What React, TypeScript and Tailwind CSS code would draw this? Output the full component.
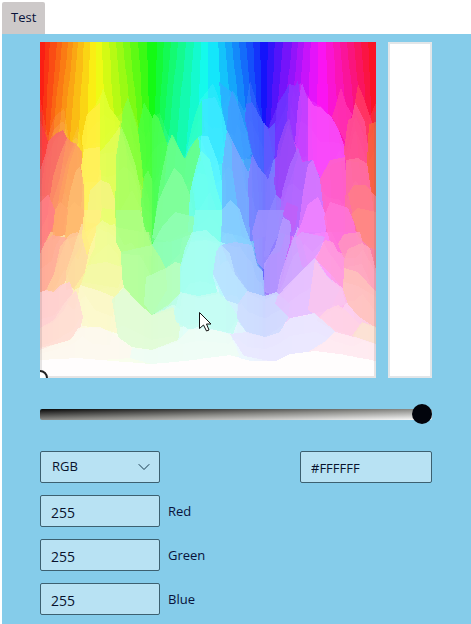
import { useState } from "react";
import { ChevronDown } from "lucide-react";

type Point = [number, number];

const SIZE = 336;

// Upper edges of the paler zones of the spectrum, from strong to faint colour
const ridges: { white: number; points: Point[] }[] = [
  {
    white: 0.08,
    points: [[0, 55], [8, 95], [14, 75], [24, 66], [30, 104], [38, 84], [42, 106], [50, 71], [57, 60], [63, 48], [70, 66], [77, 75], [82, 70], [88, 55], [98, 84], [106, 96], [113, 75], [120, 71], [127, 91], [136, 106], [145, 116], [152, 84], [160, 58], [173, 41], [182, 65], [193, 48], [205, 71], [210, 38], [223, 81], [228, 86], [237, 65], [250, 41], [256, 56], [260, 40], [270, 58], [280, 64], [290, 75], [305, 103], [315, 61], [327, 81], [336, 61]],
  },
  {
    white: 0.24,
    points: [[0, 104], [8, 116], [15, 97], [23, 91], [30, 110], [35, 98], [42, 132], [46, 112], [54, 101], [60, 101], [68, 91], [75, 85], [84, 88], [95, 125], [106, 155], [120, 130], [133, 92], [145, 120], [158, 93], [165, 106], [172, 132], [180, 112], [187, 87], [200, 115], [213, 118], [225, 133], [235, 110], [248, 75], [258, 108], [262, 116], [270, 113], [280, 135], [290, 125], [300, 108], [307, 124], [315, 85], [328, 122], [336, 105]],
  },
  {
    white: 0.48,
    points: [[0, 204], [12, 188], [15, 164], [25, 150], [38, 190], [43, 166], [54, 155], [67, 178], [75, 181], [82, 165], [92, 148], [103, 172], [113, 203], [123, 190], [143, 168], [157, 171], [170, 150], [182, 170], [190, 158], [212, 191], [217, 223], [223, 228], [225, 248], [237, 255], [246, 223], [253, 191], [262, 181], [278, 155], [287, 181], [303, 213], [307, 191], [323, 190], [336, 208]],
  },
  {
    white: 0.72,
    points: [[0, 250], [14, 248], [25, 226], [33, 248], [40, 245], [53, 215], [68, 202], [79, 214], [84, 245], [97, 259], [112, 273], [124, 265], [140, 251], [141, 225], [150, 200], [166, 198], [178, 202], [173, 231], [183, 220], [190, 218], [207, 248], [225, 258], [234, 252], [243, 251], [258, 232], [275, 216], [288, 235], [302, 246], [307, 225], [322, 222], [336, 255]],
  },
  {
    white: 0.88,
    points: [[0, 305], [16, 298], [33, 288], [42, 272], [52, 286], [70, 288], [73, 255], [84, 248], [98, 262], [112, 273], [133, 268], [140, 285], [160, 280], [173, 285], [188, 290], [197, 278], [207, 291], [225, 295], [240, 285], [250, 276], [264, 273], [275, 271], [294, 287], [313, 295], [323, 281], [336, 286]],
  },
  {
    white: 0.97,
    points: [[0, 318], [38, 316], [60, 318], [112, 322], [145, 319], [190, 313], [210, 319], [235, 319], [250, 312], [275, 309], [300, 312], [336, 319]],
  },
];

const hueStops = [
  0, 5, 10, 17, 22, 28, 33, 38, 44, 50, 56, 62, 69, 76, 83, 90, 98, 107, 117, 124,
  131, 138, 146, 154, 161, 168, 178, 185, 192, 199, 206, 213, 220, 228, 235, 243,
  252, 258, 264, 271, 278, 286, 293, 300, 307, 314, 321, 328, 336,
];

// Single-colour facets, painted in order so that lower ones cover upper ones
const facets: [string, string][] = [
  // red to yellow
  ["#fb3a40", "0,78 5,90 8,100 4,128 0,150"],
  ["#f7666a", "0,128 5,114 8,100 15,92 23,88 27,96 20,135 10,168 0,190"],
  ["#fb8c66", "8,168 13,135 20,112 27,96 36,103 30,120 24,150 15,190 8,190"],
  ["#fd9f60", "15,180 20,150 27,120 35,100 42,110 42,150 40,190 15,195"],
  ["#fdbb70", "24,185 30,150 36,128 40,125 44,140 46,190 26,198"],
  ["#ffee3c", "44,125 42,95 47,72 54,66 60,60 61,110 58,140 44,140"],
  ["#dfff30", "60,112 60,60 63,46 70,66 76,74 80,80 78,92 74,110"],
  ["#fff15e", "41,125 44,107 60,105 62,180 45,190 44,145"],
  ["#e2fd58", "60,110 70,98 76,90 80,84 78,150 76,190 62,180"],
  ["#f4f582", "46,180 50,148 61,138 70,142 76,160 76,185"],
  // yellow to green
  ["#84ff3c", "81,86 83,68 88,55 96,82 102,110 102,145 90,120"],
  ["#4aff3c", "98,88 104,60 112,75 112,168 104,140"],
  ["#a8ff60", "75,185 76,115 81,84 88,100 96,125 101,150 102,190"],
  ["#68ff58", "101,160 104,135 108,128 113,140 116,190 104,190"],
  // green to cyan
  ["#4cff50", "112,78 114,72 118,75 125,95 128,105 120,190 112,203"],
  ["#68ff84", "112,200 120,140 128,102 132,92 142,112 145,117 150,106 158,94 161,118 152,140 158,185 125,200"],
  ["#84ff9c", "112,196 118,160 124,146 134,126 142,134 149,150 158,190 130,200"],
  ["#2cffc4", "148,105 152,84 156,70 162,58 165,90 160,94"],
  ["#3ce8ff", "162,100 162,58 175,55 182,70 187,88 182,122 170,122"],
  ["#5cf6ff", "161,112 161,94 168,94 178,120 184,150 183,185 170,150"],
  ["#6cfff0", "148,190 150,150 156,125 161,108 170,118 176,145 183,168 182,200"],
  // cyan to blue
  ["#2cb0ff", "182,65 179,40 185,45 192,50 200,68 195,94 187,90"],
  ["#409cff", "187,90 188,66 192,48 200,68 206,88 212,112 204,118 195,115"],
  ["#68b8ff", "182,125 187,88 192,98 200,115 206,150 205,195 182,190"],
  ["#78a4ff", "192,125 192,98 202,118 208,130 212,120 212,200 202,195"],
  ["#4868ff", "205,78 206,62 212,60 223,80 228,86 235,110 234,130 225,133 214,118"],
  ["#7a80ff", "210,200 208,140 212,112 218,124 225,133 235,115 237,190"],
  // blue to magenta
  ["#6a34ff", "228,86 235,85 237,62 245,50 249,42 250,75 240,110 234,118"],
  ["#6058ff", "224,130 224,80 228,88 235,80 235,112 228,138"],
  ["#8f34ff", "247,78 249,42 255,44 258,38 262,70 257,105 252,95"],
  ["#c444ff", "255,100 258,62 262,40 267,56 271,60 273,122 262,118"],
  ["#f84cfa", "268,120 268,55 274,64 280,65 285,70 290,73 298,86 304,103 306,118 292,122 280,137"],
  ["#9448f8", "234,140 238,104 244,85 249,76 254,100 258,114 250,140 238,160"],
  ["#8c84ff", "224,215 228,172 236,152 243,160 246,190 240,210"],
  ["#ac68ff", "238,190 242,150 250,122 258,105 262,120 272,118 282,140 284,190 255,195"],
  ["#d878ff", "258,190 263,150 268,122 273,118 280,137 286,160 287,190"],
  // magenta to red
  ["#ff30b0", "292,75 296,62 301,45 306,62 312,72 306,102"],
  ["#ff3864", "314,66 318,42 324,56 332,80 328,100"],
  ["#ff5090", "304,108 308,78 312,76 315,60 325,80 330,122 315,120 305,118"],
  ["#ff62c8", "280,137 290,118 305,115 308,190 286,190"],
  ["#ff70a0", "305,190 306,118 318,116 328,122 332,150 334,190"],
  ["#f8643c", "327,120 329,82 336,80 336,190 332,155"],
  ["#ff7c88", "308,152 314,143 326,143 336,155 336,208 318,195"],

  // lower half, red to yellow
  ["#ff7f86", "0,160 8,152 15,168 13,185 8,195 3,205 0,212"],
  ["#ffa86c", "12,198 15,168 20,160 28,168 26,190"],
  ["#ffbb70", "25,198 28,168 34,160 44,168 43,185 38,192"],
  ["#ffaa98", "0,212 5,200 12,193 27,196 18,220 14,232 6,248 0,250"],
  ["#ffc79a", "6,250 14,232 20,205 30,192 38,190 40,205 32,220 25,240 16,250"],
  ["#fddba0", "26,248 26,230 34,205 42,180 50,205 45,230 35,245"],
  ["#fff080", "42,195 44,168 60,168 64,178 56,190 52,200 47,214"],
  ["#e9ff70", "60,180 62,166 75,168 76,184 70,188"],
  ["#f0fb94", "42,240 50,215 55,205 56,185 62,178 70,183 75,182 80,200 82,235 78,246"],
  ["#f5f8a8", "40,245 48,223 66,220 82,225 83,245 75,255 73,275 55,268"],
  ["#fbf8cc", "40,243 50,246 62,250 74,255 78,292 60,286 42,284 36,265"],
  ["#ffcfd2", "0,250 6,248 14,250 20,243 30,240 33,250 24,268 14,280 0,286"],
  ["#ffdcd4", "0,306 0,286 14,278 24,262 30,254 36,248 40,262 43,275 40,287 30,298 16,302"],
  // lower half, yellow to cyan
  ["#acff84", "76,200 76,168 100,168 106,190 112,203 112,214 82,212"],
  ["#90ffb4", "112,203 122,185 135,170 155,175 152,195 148,206 141,222 135,220 126,227 120,215"],
  ["#b0ff9c", "82,235 81,210 112,203 120,215 126,227 127,248 112,273 97,260 84,245"],
  ["#b8ffba", "106,235 126,226 135,220 141,222 141,250 130,262 112,273 104,262"],
  ["#86ffec", "152,198 155,168 182,168 182,180 180,200 166,198"],
  ["#a2fff0", "140,226 145,206 152,190 166,188 180,200 178,215 173,235 178,252 158,256 140,250"],
  ["#dffcd4", "72,258 83,246 97,260 112,273 133,265 140,285 138,300 112,308 92,305 78,295"],
  ["#c4fdf2", "134,270 140,250 158,254 178,250 190,262 199,276 193,292 175,288 160,284 150,288 136,280"],
  // lower half, cyan to magenta
  ["#88d0ff", "181,200 182,168 190,158 200,168 205,185 212,203 195,205"],
  ["#a8c8ff", "181,203 195,200 212,203 217,223 223,230 225,260 207,250 192,228"],
  ["#b8e0ff", "173,232 176,210 181,203 190,212 195,232 207,248 200,263 186,258"],
  ["#9c90ff", "217,220 212,190 218,168 244,168 240,190 232,205 224,228"],
  ["#b49cff", "224,250 224,222 235,205 243,175 251,180 250,200 242,230 238,254"],
  ["#cca8ff", "236,255 240,235 250,205 258,184 262,200 268,222 250,242"],
  ["#c060f8", "243,172 247,160 258,165 256,182 253,191 250,180"],
  ["#f084ff", "256,194 262,180 268,162 278,155 284,168 287,180 284,198 272,210"],
  ["#dd9cff", "255,196 262,190 285,195 280,208 268,225 262,225"],
  ["#cfdcff", "198,262 207,249 224,254 236,250 250,262 248,276 240,290 225,295 207,291 197,276"],
  ["#e4c2ff", "235,262 237,255 250,240 262,228 275,216 288,235 300,247 290,268 270,272 250,276"],
  // lower half, magenta to red
  ["#ff74d8", "284,175 290,160 308,166 314,180 318,205 302,215 290,200 286,185"],
  ["#ff8a84", "311,172 318,166 336,170 336,208 328,205 320,196"],
  ["#ff9cdc", "276,217 285,198 293,200 298,210 306,212 303,247 295,237"],
  ["#ff94c0", "298,202 304,192 320,190 324,206 316,216 304,216"],
  ["#ffa6bc", "304,218 308,207 322,201 330,206 336,228 336,255 318,244 304,240"],
  ["#ffc2bc", "303,248 304,226 318,230 336,250 336,286 318,274 308,262"],
  ["#f9c6ee", "268,268 275,217 288,236 302,247 306,262 295,266 280,276"],
  ["#ffd2e4", "276,278 286,268 298,263 308,270 320,283 314,295 296,290"],
  ["#fbe2d0", "312,294 322,280 336,285 336,302"],
  // faint foot
  ["#fdf8ee", "0,308 16,302 31,298 38,286 60,285 74,292 92,306 92,316 60,318 0,322"],
  ["#effdf4", "92,306 112,308 138,298 150,287 175,288 190,292 200,314 160,320 112,322 90,316"],
  ["#e8e6ff", "190,292 207,290 225,295 240,290 250,276 264,274 274,271 296,290 285,300 272,310 235,320 204,314"],
  ["#ffeaf0", "268,310 284,300 294,290 314,295 336,302 336,320 275,312"],
];

function heightAt(points: Point[], x: number) {
  for (let i = 1; i < points.length; i++) {
    const [x0, y0] = points[i - 1];
    const [x1, y1] = points[i];
    if (x >= x0 && x <= x1) return y0 + ((y1 - y0) * (x - x0)) / (x1 - x0);
  }
  return points[points.length - 1][1];
}

// Every ridge is split in two so that the colour falls off in small steps
function buildLayers() {
  const layers: { d: string; opacity: number }[] = [];
  let reached = 0;
  ridges.forEach((ridge, i) => {
    const next = ridges[i + 1];
    const nextWhite = next ? next.white : 1;
    for (let step = 0; step < 2; step++) {
      const mix = step / 2;
      const white = ridge.white + (nextWhite - ridge.white) * mix;
      let d = `M0 ${SIZE}`;
      for (let x = 0; x <= SIZE; x += 2) {
        const top = heightAt(ridge.points, x);
        const bottom = next ? heightAt(next.points, x) : SIZE;
        d += `L${x} ${Math.round(top + (bottom - top) * mix)}`;
      }
      layers.push({ d: `${d}L${SIZE} ${SIZE}Z`, opacity: 1 - (1 - white) / (1 - reached) });
      reached = white;
    }
  });
  return layers;
}

// Bands lean towards the nearest of red, green and blue on their way down
function bandPath(left: number) {
  const lean = -Math.sin((left / 112) * 2 * Math.PI) * 0.1;
  let d = `M${left} 0`;
  for (let y = 0; y <= SIZE; y += 12) {
    d += `L${Math.round(left + lean * Math.min(y, 150))} ${y}`;
  }
  return `${d}L${SIZE} ${SIZE}L${SIZE} 0Z`;
}

const layers = buildLayers();
const faint = layers[layers.length - 2];

function Spectrum() {
  return (
    <div className="relative aspect-square min-w-0 flex-1 overflow-hidden">
      <svg viewBox="0 0 336 336" className="block h-full w-full" role="img" aria-label="Color spectrum">
        <g shapeRendering="crispEdges">
          {hueStops.slice(0, -1).map((left, i) => (
            <path key={left} d={bandPath(left)} fill={`hsl(${((left + hueStops[i + 1]) / 2 / SIZE) * 360} 96% 53%)`} />
          ))}
          {layers.map((layer, i) => (
            <path key={i} d={layer.d} fill="#fff" fillOpacity={layer.opacity} />
          ))}
          {facets.map(([color, points]) => (
            <polygon key={points} points={points} fill={color} fillOpacity="0.85" />
          ))}
          <path d={faint.d} fill="#fffdfd" />
          <path d="M0 70h2v264h332V70h2v266H0Z" fill="#777" fillOpacity="0.18" />
        </g>
        <circle cx="0" cy="336" r="7" fill="#fff" stroke="#222" strokeWidth="2" />
        <path
          d="M159.500 270.500V286.500L163.500 283L166.500 289L169 288L166.500 282H171Z"
          fill="#fff"
          stroke="#111"
          strokeWidth="1"
        />
      </svg>
    </div>
  );
}

const fieldClass =
  "h-8 rounded-xs border border-[#3c6070] bg-[#b8e2f3] text-[#08122c] outline-none";

interface ChannelProps {
  label: string;
  value: string;
  onChange: (value: string) => void;
}

function Channel({ label, value, onChange }: ChannelProps) {
  const id = label.toLowerCase();
  return (
    <div className="flex items-center gap-2">
      <input
        id={id}
        value={value}
        onChange={(e) => onChange(e.target.value)}
        className={`${fieldClass} w-[120px] px-2.5 pt-0.5 text-sm`}
      />
      <label htmlFor={id} className="pt-0.5 text-[13px]">
        {label}
      </label>
    </div>
  );
}

export default function App() {
  const [channels, setChannels] = useState({ Red: "255", Green: "255", Blue: "255" });
  const [hex, setHex] = useState("#FFFFFF");
  const [level, setLevel] = useState(100);

  return (
    <div className="flex min-h-screen flex-col bg-white pt-0.5 pl-0.5 font-['Open_Sans','Noto_Sans',sans-serif] text-[#08123a]">
      <button className="h-8 self-start rounded-t-xs bg-[#cdc9c9] px-[9px] text-[13px]">Test</button>

      <main className="flex-1 bg-[#85ccea] pt-2 pr-[39px] pb-2 pl-[38px]">
        <div className="flex gap-3">
          <Spectrum />
          <div className="w-11 border-2 border-[#e2e6e9] bg-white" />
        </div>

        <input
          type="range"
          aria-label="Value"
          min={0}
          max={100}
          value={level}
          onChange={(e) => setLevel(Number(e.target.value))}
          className="mt-[26px] block h-5 w-full appearance-none bg-transparent outline-none [&::-webkit-slider-runnable-track]:h-[11px] [&::-webkit-slider-runnable-track]:rounded-xs [&::-webkit-slider-runnable-track]:bg-[linear-gradient(to_bottom_right,#080808,#8c8c88,#ffffff)] [&::-webkit-slider-thumb]:-mt-[5px] [&::-webkit-slider-thumb]:size-5 [&::-webkit-slider-thumb]:appearance-none [&::-webkit-slider-thumb]:rounded-full [&::-webkit-slider-thumb]:bg-[#02040c]"
        />

        <div className="mt-[27px] flex justify-between">
          <div className="relative">
            <select
              aria-label="Color model"
              defaultValue="RGB"
              className={`${fieldClass} w-[120px] appearance-none px-[11px] text-[13px]`}
            >
              <option>RGB</option>
              <option>HSV</option>
            </select>
            <ChevronDown
              strokeWidth={1.2}
              className="pointer-events-none absolute top-1.5 right-1.5 size-5 text-[#16384c]"
            />
          </div>
          <input
            aria-label="Hex"
            value={hex}
            onChange={(e) => setHex(e.target.value)}
            className={`${fieldClass} w-[132px] px-2.5 pt-0.5 text-[13px]`}
          />
        </div>

        <div className="mt-3 flex flex-col gap-3">
          {(["Red", "Green", "Blue"] as const).map((name) => (
            <Channel
              key={name}
              label={name}
              value={channels[name]}
              onChange={(value) => setChannels({ ...channels, [name]: value })}
            />
          ))}
        </div>
      </main>
    </div>
  );
}
